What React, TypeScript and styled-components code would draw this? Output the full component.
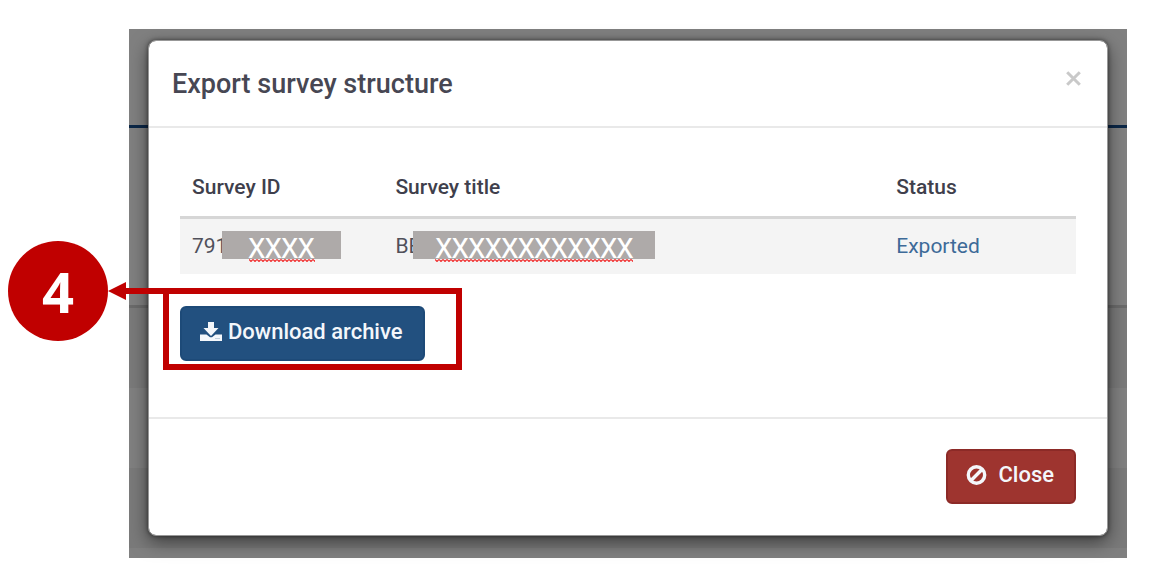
import React from "react";
import styled, { createGlobalStyle } from "styled-components";

const GlobalStyle = createGlobalStyle`
  *, *::before, *::after { box-sizing: border-box; }
  body {
    margin: 0;
    background: #fff;
    color: #3f3f4c;
    font-family: Roboto, "Liberation Sans", sans-serif;
    font-size: 21px;
    line-height: 28px;
  }
`;

const Page = styled.div`
  padding: 29px 24px 27px 129px;
`;

const Backdrop = styled.div`
  position: relative;
  padding: 11px 19px 22px;
  background: #808080;
`;

const Behind = styled.div`
  position: absolute;
  inset: 0;
  display: flex;
  flex-direction: column;
  overflow: hidden;
`;

const Band = styled.div<{ $height: number; $color?: string }>`
  flex: none;
  height: ${(p) => p.$height}px;
  background: ${(p) => p.$color ?? "transparent"};
`;

const Dialog = styled.section`
  position: relative;
  background: #fff;
  border: 1px solid #989898;
  border-radius: 8px;
  background-clip: padding-box;
  box-shadow: 0 6px 18px rgba(0, 0, 0, 0.5), 0 0 4px rgba(0, 0, 0, 0.5);
`;

const Header = styled.header`
  display: flex;
  justify-content: space-between;
  align-items: flex-start;
  padding: 24px 24px 22px 23px;
  border-bottom: 2px solid #e9e9e9;
`;

const Title = styled.h1`
  margin: 0;
  color: #474753;
  font-size: 27px;
  line-height: 39px;
  font-weight: 500;
`;

const Dismiss = styled.button`
  display: flex;
  padding: 6px 2px;
  border: 0;
  background: none;
  cursor: pointer;
`;

const Body = styled.div`
  padding: 32px 31px 56px;
`;

const Table = styled.table`
  width: 100%;
  table-layout: fixed;
  border-collapse: separate;
  border-spacing: 0;
`;

const HeadCell = styled.th<{ $width?: string }>`
  width: ${(p) => p.$width ?? "auto"};
  padding: 13px 12px 15px;
  border-bottom: 3px solid #d6d6d6;
  text-align: left;
  font-weight: 500;
`;

const Cell = styled.td<{ $accent?: boolean }>`
  position: relative;
  padding: 13px 12px 14px;
  background: #f4f4f4;
  color: ${(p) => (p.$accent ? "#3d6a98" : "#50505a")};
`;

const Redaction = styled.span<{ $left: number; $width: number }>`
  position: absolute;
  top: 12px;
  left: ${(p) => p.$left}px;
  width: ${(p) => p.$width}px;
  height: 28px;
  display: flex;
  justify-content: center;
  background: #aeaaa9;
  color: #fff;
  font-family: "Noto Sans", "Open Sans", sans-serif;
  font-size: 27px;
  font-weight: 500;
  line-height: 34px;
`;

const Misspelled = styled.span`
  position: relative;
`;

const Squiggle = styled.svg`
  position: absolute;
  left: 0;
  top: 28px;
  width: 100%;
  height: 3px;
`;

const ActionArea = styled.div`
  position: relative;
  display: flex;
  margin-top: 32px;
`;

const Button = styled.button<{ $tone: "primary" | "danger" }>`
  display: flex;
  align-items: center;
  gap: ${(p) => (p.$tone === "primary" ? 6 : 11)}px;
  height: 55px;
  padding: 0 20px 3px 18px;
  border: 2px solid ${(p) => (p.$tone === "primary" ? "#1d4a78" : "#8c2a27")};
  border-radius: 6px;
  background: ${(p) => (p.$tone === "primary" ? "#22507f" : "#9e342f")};
  color: #f4f7fb;
  font: 500 22px/32px Roboto, "Liberation Sans", sans-serif;
  white-space: nowrap;
  cursor: pointer;
`;

const Footer = styled.footer`
  display: flex;
  justify-content: flex-end;
  padding: 30px 31px 31px;
  border-top: 2px solid #e9e9e9;
`;

const Highlight = styled.div`
  position: absolute;
  top: -18px;
  left: -17px;
  width: 299px;
  height: 82px;
  border: 6px solid #c00000;
  pointer-events: none;
`;

const Callout = styled.div`
  position: absolute;
  top: -53px;
  left: -161px;
  display: flex;
  align-items: center;
`;

const StepNumber = styled.span`
  width: 100px;
  height: 100px;
  border-radius: 50%;
  background: #c00000;
  color: #fff;
  font: 700 56px/100px "Noto Sans", "Open Sans", sans-serif;
  text-align: center;
`;

const Redacted = ({ text, left, width }: { text: string; left: number; width: number }) => {
  const id = `wave-${text.length}`;
  return (
    <Redaction $left={left} $width={width}>
      <Misspelled>
        {text}
        <Squiggle aria-hidden="true">
          <defs>
            <pattern id={id} width="4" height="3" patternUnits="userSpaceOnUse">
              <path d="M0 .5 2 2.5 4 .5" fill="none" stroke="#f03030" strokeWidth="1.200" />
            </pattern>
          </defs>
          <rect width="100%" height="3" fill={`url(#${id})`} />
        </Squiggle>
      </Misspelled>
    </Redaction>
  );
};

const DownloadIcon = () => (
  <svg width="22" height="20" viewBox="0 0 22 20" fill="currentColor" aria-hidden="true">
    <path d="M8 0h6v6h4.500l-7.500 8-7.500-8H8z" />
    <path d="M0 12.500h6.500l3.500 2.800h2l3.500-2.800h6.500V19H0z" />
    <path d="M15 16.500h5" stroke="#9db3ca" strokeWidth=".6" />
  </svg>
);

const BanIcon = () => (
  <svg width="21" height="20" viewBox="0 0 21 20" fill="none" stroke="currentColor" strokeWidth="3.400" aria-hidden="true">
    <circle cx="10.500" cy="10" r="8.200" />
    <path d="m4.800 15.700 11.400-11.400" />
  </svg>
);

const CrossIcon = () => (
  <svg width="15" height="15" viewBox="0 0 15 15" fill="none" stroke="#c9c9c9" strokeWidth="3" aria-hidden="true">
    <path d="m1.200 1.200 12.600 12.600M13.800 1.200 1.200 13.800" />
  </svg>
);

export default function App() {
  return (
    <Page>
      <GlobalStyle />
      <Backdrop>
        <Behind aria-hidden="true">
          <Band $height={96} />
          <Band $height={3} $color="#0b2747" />
          <Band $height={177} />
          <Band $height={3} $color="#6b6b6b" />
          <Band $height={80} $color="#7a7a7a" />
          <Band $height={80} />
          <Band $height={80} $color="#7a7a7a" />
        </Behind>
        <Dialog role="dialog" aria-labelledby="dialog-title">
          <Header>
            <Title id="dialog-title">Export survey structure</Title>
            <Dismiss type="button" aria-label="Dismiss">
              <CrossIcon />
            </Dismiss>
          </Header>
          <Body>
            <Table>
              <thead>
                <tr>
                  <HeadCell scope="col" $width="22.7%">Survey ID</HeadCell>
                  <HeadCell scope="col" $width="55.9%">Survey title</HeadCell>
                  <HeadCell scope="col">Status</HeadCell>
                </tr>
              </thead>
              <tbody>
                <tr>
                  <Cell>
                    791
                    <Redacted text="XXXX" left={42} width={119} />
                  </Cell>
                  <Cell>
                    BE
                    <Redacted text="XXXXXXXXXXXX" left={30} width={242} />
                  </Cell>
                  <Cell $accent>Exported</Cell>
                </tr>
              </tbody>
            </Table>
            <ActionArea>
              <Button type="button" $tone="primary">
                <DownloadIcon />
                Download archive
              </Button>
              <Highlight>
                <Callout>
                  <StepNumber>4</StepNumber>
                  <svg width="55" height="18" viewBox="0 0 55 18" fill="#c00000" aria-hidden="true">
                    <path d="M0 9 18 0v6h37v6H18v6z" />
                  </svg>
                </Callout>
              </Highlight>
            </ActionArea>
          </Body>
          <Footer>
            <Button type="button" $tone="danger">
              <BanIcon />
              Close
            </Button>
          </Footer>
        </Dialog>
      </Backdrop>
    </Page>
  );
}
